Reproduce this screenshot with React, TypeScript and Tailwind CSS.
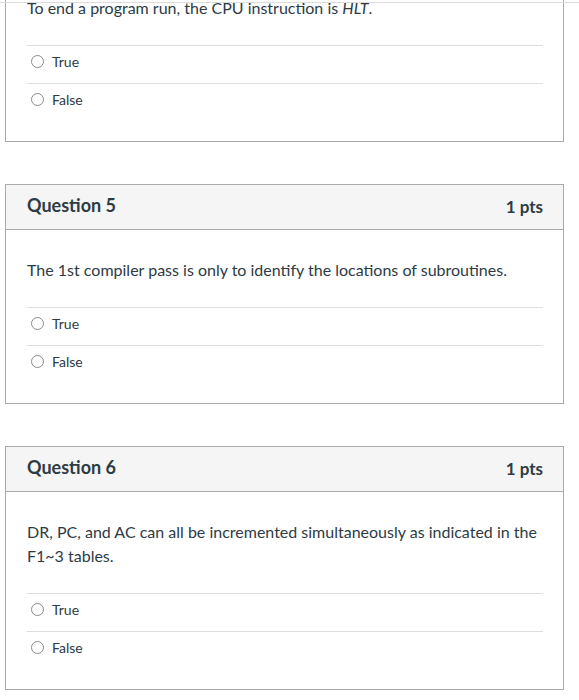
import React from 'react';

interface Question {
  id: number;
  title: string;
  points: string;
  text: React.ReactNode;
  answers: string[];
}

const QUESTIONS: Question[] = [
  {
    id: 4,
    title: 'Question 4',
    points: '1 pts',
    text: (
      <>
        To end a program run, the CPU instruction is <em>HLT</em>.
      </>
    ),
    answers: ['True', 'False'],
  },
  {
    id: 5,
    title: 'Question 5',
    points: '1 pts',
    text: 'The 1st compiler pass is only to identify the locations of subroutines.',
    answers: ['True', 'False'],
  },
  {
    id: 6,
    title: 'Question 6',
    points: '1 pts',
    text: 'DR, PC, and AC can all be incremented simultaneously as indicated in the F1~3 tables.',
    answers: ['True', 'False'],
  },
];

const Radio: React.FC = () => (
  <span className="w-[13px] h-[13px] rounded-full border border-[#8a8a8a] bg-white shrink-0" />
);

const QuestionCard: React.FC<{ q: Question; first?: boolean }> = ({ q, first }) => (
  <div
    className={`w-[559px] ml-[5px] mb-[42px] border border-[#aaaaaa] bg-white ${first ? 'mt-[-78px]' : ''}`}
  >
    {/* Header */}
    <div className="h-[45px] bg-[#f5f5f5] border-b border-[#aaaaaa] pl-[21px] pr-[20px] flex items-center justify-between">
      <span className="text-[18px] font-bold text-[#2d3b45] mb-[3px]">{q.title}</span>
      <span className="text-[17px] font-bold text-[#2d3b45] mb-[1px]">{q.points}</span>
    </div>

    {/* Body */}
    <div className="pl-[21px] pr-[20px] pt-[28px] pb-[20px]">
      <div className="text-[16px] leading-[24px] text-[#2d3b45] mb-[25px]">{q.text}</div>
      {q.answers.map((a) => (
        <div key={a} className="border-t border-[#dddddd] h-[38px] flex items-center gap-[8px] pl-[4px] pb-[6px]">
          <Radio />
          <span className="text-[14px] text-[#2d3b45]">{a}</span>
        </div>
      ))}
    </div>
  </div>
);

export default function App() {
  return (
    <div
      className="relative w-[579px] h-[700px] overflow-hidden bg-white"
      style={{ fontFamily: 'Lato, "Liberation Sans", sans-serif' }}
    >
      {QUESTIONS.map((q, i) => (
        <QuestionCard key={q.id} q={q} first={i === 0} />
      ))}
      {/* faint line across the top edge */}
      <div className="absolute top-[2px] left-0 w-full h-px bg-[#dcdcdc]" />
    </div>
  );
}
